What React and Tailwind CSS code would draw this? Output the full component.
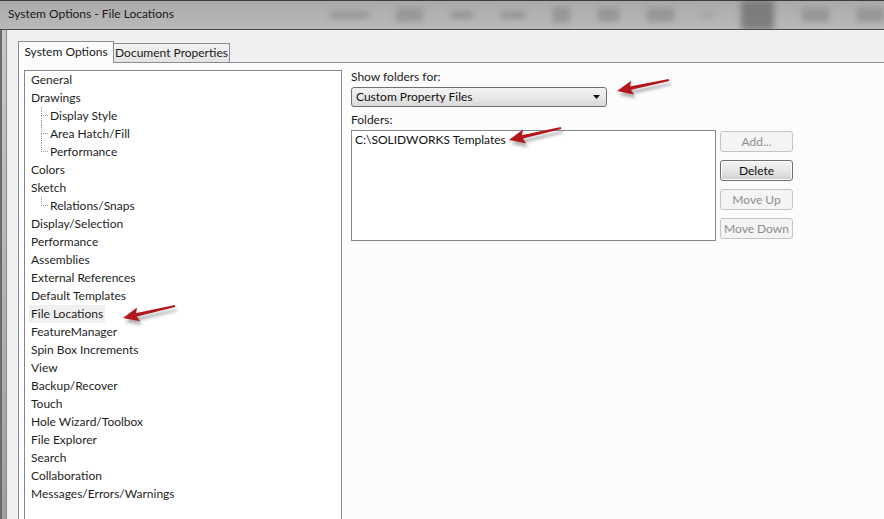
import React from "react";

const font = { fontFamily: "Lato, 'Noto Sans', Arial, sans-serif" };

const items = [
  { t: "General" },
  { t: "Drawings" },
  { t: "Display Style", c: 1 },
  { t: "Area Hatch/Fill", c: 1 },
  { t: "Performance", c: 1, last: true },
  { t: "Colors" },
  { t: "Sketch" },
  { t: "Relations/Snaps", c: 1, last: true },
  { t: "Display/Selection" },
  { t: "Performance" },
  { t: "Assemblies" },
  { t: "External References" },
  { t: "Default Templates" },
  { t: "File Locations", sel: true },
  { t: "FeatureManager" },
  { t: "Spin Box Increments" },
  { t: "View" },
  { t: "Backup/Recover" },
  { t: "Touch" },
  { t: "Hole Wizard/Toolbox" },
  { t: "File Explorer" },
  { t: "Search" },
  { t: "Collaboration" },
  { t: "Messages/Errors/Warnings" },
];

function TreeRow({ it }) {
  if (it.c) {
    return (
      <div className="flex h-[18px] items-stretch">
        <div className="ml-[10px] flex w-[7px] flex-col">
          <div className="h-[9px] border-l border-b border-dotted border-[#9a9a9a]" />
          <div className={"h-[9px] border-dotted border-[#9a9a9a] " + (it.last ? "" : "border-l")} />
        </div>
        <div className="ml-[2px] flex items-center whitespace-nowrap text-[12px] leading-none text-[#1e1e1e]">{it.t}</div>
      </div>
    );
  }
  return (
    <div className="flex h-[18px] items-center">
      <span
        className={
          "-ml-[2px] flex h-[18px] items-center whitespace-nowrap px-[2px] text-[12px] leading-none text-[#1e1e1e] " +
          (it.sel ? "bg-[#efefef]" : "")
        }
      >
        {it.t}
      </span>
    </div>
  );
}

function Arrow({ x1, y1, x2, y2 }) {
  const dx = x2 - x1;
  const dy = y2 - y1;
  const len = Math.sqrt(dx * dx + dy * dy);
  const ux = dx / len;
  const uy = dy / len;
  const px = -uy;
  const py = ux;
  const hl = 16;
  const hw = 7;
  const bx = x2 - ux * hl;
  const by = y2 - uy * hl;
  const head = `${x2},${y2} ${bx + px * hw},${by + py * hw} ${bx + ux * 3},${by + uy * 3} ${bx - px * hw},${by - py * hw}`;
  const shaft = `${x1 + px * 1},${y1 + py * 1} ${bx + ux * 4 + px * 1.8},${by + uy * 4 + py * 1.8} ${bx + ux * 4 - px * 1.8},${by + uy * 4 - py * 1.8} ${x1 - px * 1},${y1 - py * 1}`;
  return (
    <g>
      <g transform="translate(2,4)" fill="#555" opacity="0.45" filter="url(#blur)">
        <polygon points={head} />
        <polygon points={shaft} />
      </g>
      <polygon points={shaft} fill="#b3171b" />
      <polygon points={head} fill="#b3171b" />
    </g>
  );
}

function Btn({ children, enabled }) {
  return (
    <div
      className={
        "flex h-[21px] w-[73px] items-center justify-center rounded-[3px] border text-[12px] leading-none " +
        (enabled
          ? "border-[#707070] bg-gradient-to-b from-[#f2f2f2] via-[#e6e6e6] to-[#cfcfcf] text-[#111] shadow-[inset_0_0_0_1px_#fbfbfb]"
          : "border-[#c2c5c8] bg-[#f4f4f4] text-[#8e8e8e]")
      }
    >
      {children}
    </div>
  );
}

export default function App() {
  return (
    <div className="relative h-[519px] w-[884px] overflow-hidden bg-[#f0f0f0]" style={font}>
      {/* title bar */}
      <div className="relative h-[29px] overflow-hidden border-t border-[#3c3c3c] bg-gradient-to-b from-[#a9aaa9] to-[#b9bab9]">
        <div className="absolute inset-0 flex items-center gap-[28px] pl-[330px] blur-[3px]">
          <div className="h-[6px] w-[70px] bg-[#7a7a7a] opacity-60" />
          <div className="h-[14px] w-[50px] bg-[#7d7d7d] opacity-50" />
          <div className="h-[6px] w-[40px] bg-[#777] opacity-60" />
          <div className="h-[6px] w-[45px] bg-[#777] opacity-60" />
          <div className="h-[16px] w-[30px] bg-[#7a7a7a] opacity-50" />
          <div className="h-[14px] w-[40px] bg-[#7a7a7a] opacity-50" />
          <div className="h-[14px] w-[50px] bg-[#7a7a7a] opacity-50" />
          <div className="h-[6px] w-[20px] bg-[#8a8a8a] opacity-40" />
          <div className="h-[30px] w-[60px] bg-[#6f6f6f] opacity-80" />
          <div className="h-[14px] w-[50px] bg-[#7a7a7a] opacity-50" />
          <div className="h-[14px] w-[50px] bg-[#7a7a7a] opacity-50" />
        </div>
        <div className="relative whitespace-nowrap pl-[8px] pt-[7px] text-[12px] leading-none text-[#1a1a1a]">
          System Options - File Locations
        </div>
      </div>
      <div className="h-[1px] bg-[#4a4a4a]" />

      {/* body */}
      <div className="flex h-[489px]">
        <div className="w-[7px] border-l-2 border-r border-l-[#6a6a6a] border-r-[#8a8a8a] bg-gradient-to-b from-[#c9c9c9] to-[#a0a0a0]" />
        <div className="flex flex-1 flex-col pl-[11px] pt-[11px]">
          {/* tabs */}
          <div className="flex h-[21px] items-end">
            <div className="relative z-10 -mb-[1px] flex h-[22px] w-[96px] items-start justify-center whitespace-nowrap border border-b-0 border-[#898c95] bg-[#fcfcfc] pt-[4px] text-[12px] leading-none text-[#1a1a1a]">
              System Options
            </div>
            <div className="flex h-[19px] w-[116px] items-center justify-center whitespace-nowrap border border-l-0 border-b-0 border-[#898c95] bg-gradient-to-b from-[#f2f2f2] to-[#e3e3e3] text-[12px] leading-none text-[#1a1a1a]">
              Document Properties
            </div>
          </div>
          {/* panel */}
          <div className="flex flex-1 border-l border-t border-[#898c95] bg-[#fcfcfc] pl-[5px] pt-[7px]">
            <div className="w-[318px] border border-b-0 border-[#828790] bg-white pl-[6px]">
              {items.map((it, i) => (
                <TreeRow key={i} it={it} />
              ))}
            </div>
            <div className="ml-[9px] flex flex-col">
              <div className="flex h-[14px] items-center text-[12px] leading-none text-[#1a1a1a]">Show folders for:</div>
              <div className="mt-[3px] flex h-[20px] w-[256px] items-center justify-between rounded-[3px] border border-[#707070] bg-gradient-to-b from-[#f2f2f2] via-[#e9e9e9] to-[#d8d8d8] pl-[4px] pr-[6px] text-[12px] leading-none text-[#111]">
                <span>Custom Property Files</span>
                <svg width="7" height="4" viewBox="0 0 7 4">
                  <polygon points="0,0 7,0 3.5,4" fill="#111" />
                </svg>
              </div>
              <div className="mt-[5px] flex h-[16px] items-center text-[12px] leading-none text-[#1a1a1a]">Folders:</div>
              <div className="mt-[2px] flex">
                <div className="h-[111px] w-[365px] whitespace-nowrap border border-[#828790] bg-white pl-[3px] pt-[3px] text-[12px] leading-none text-[#111]">
                  C:\SOLIDWORKS Templates
                </div>
                <div className="ml-[4px] flex flex-col gap-[8px] pt-[1px]">
                  <Btn>Add...</Btn>
                  <Btn enabled>Delete</Btn>
                  <Btn>Move Up</Btn>
                  <Btn>Move Down</Btn>
                </div>
              </div>
            </div>
          </div>
        </div>
      </div>

      {/* annotation arrows */}
      <svg className="pointer-events-none absolute inset-0" width="884" height="519">
        <defs>
          <filter id="blur" x="-20%" y="-50%" width="140%" height="200%">
            <feGaussianBlur stdDeviation="1.6" />
          </filter>
        </defs>
        <Arrow x1={669} y1={80} x2={617} y2={91} />
        <Arrow x1={561} y1={128} x2={509} y2={140} />
        <Arrow x1={175} y1={306} x2={123} y2={318} />
      </svg>
    </div>
  );
}
